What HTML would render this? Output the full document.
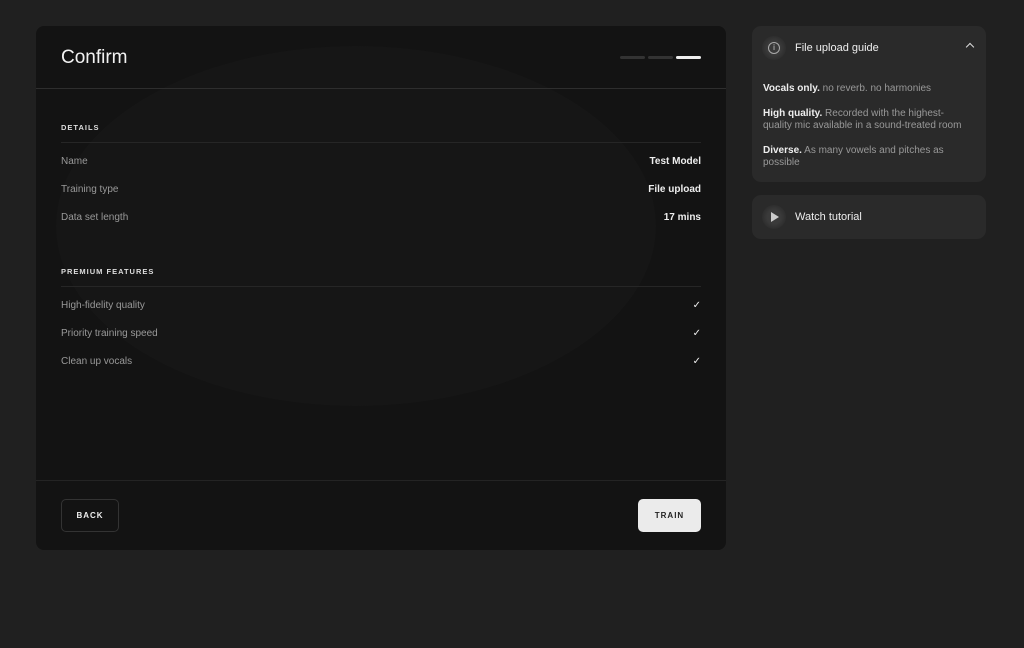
<!DOCTYPE html>
<html><head><meta charset="utf-8"><style>
*{box-sizing:border-box;margin:0;padding:0}
body{width:1024px;height:648px;background:#202020;font-family:"Liberation Sans",sans-serif;position:relative;overflow:hidden;color:#fff}
.card{position:absolute;left:36px;top:26px;width:690px;height:524px;background:#131313;border-radius:8px;overflow:hidden}
.glow{position:absolute;left:20px;top:20px;width:600px;height:360px;border-radius:50%;background:#161616}
.title{position:absolute;left:25px;top:21px;font-size:19px;color:#f2f2f2}
.prog{position:absolute;top:30px;height:3px;border-radius:2px}
.hr{position:absolute;left:0;right:0;height:1px;background:#2a2a2a}
.sec{position:absolute;left:25px;font-size:7.5px;font-weight:bold;letter-spacing:1px;color:#ddd}
.line{position:absolute;left:25px;width:640px;height:1px;background:#262626}
.row{position:absolute;left:25px;width:640px;font-size:10px;display:flex;justify-content:space-between}
.row span:first-child{color:#999}
.row span:last-child{color:#eee;font-weight:bold}
.row span.ck{font-weight:normal}
.btn{position:absolute;top:473px;height:33px;border-radius:5px;font-size:8px;font-weight:bold;letter-spacing:1px;display:flex;align-items:center;justify-content:center}
.panel{position:absolute;left:752px;width:234px;background:#2a2a2a;border-radius:9px}
.ic{position:absolute;left:10px;width:24px;height:24px;border-radius:50%;background:radial-gradient(circle,#3a3a3a 40%,#2c2c2c 75%)}
.p{font-size:10px;color:#999;line-height:12px;margin-bottom:13px}
.p b{color:#eee}
</style></head><body>
<div class="card">
<div class="glow"></div>
<div class="title">Confirm</div>
<div class="prog" style="left:584px;width:25px;background:#333"></div>
<div class="prog" style="left:612px;width:25px;background:#333"></div>
<div class="prog" style="left:640px;width:25px;background:#eee"></div>
<div class="hr" style="top:62px;background:#2e2e2e"></div>
<div class="sec" style="top:97px">DETAILS</div>
<div class="line" style="top:116px"></div>
<div class="row" style="top:130px"><span>Name</span><span>Test Model</span></div>
<div class="row" style="top:158px"><span>Training type</span><span>File upload</span></div>
<div class="row" style="top:186px"><span>Data set length</span><span>17 mins</span></div>
<div class="sec" style="top:241px">PREMIUM FEATURES</div>
<div class="line" style="top:260px"></div>
<div class="row" style="top:274px"><span>High-fidelity quality</span><span class="ck">✓</span></div>
<div class="row" style="top:302px"><span>Priority training speed</span><span class="ck">✓</span></div>
<div class="row" style="top:330px"><span>Clean up vocals</span><span class="ck">✓</span></div>
<div class="hr" style="top:454px;background:#242424"></div>
<div class="btn" style="left:25px;width:58px;border:1px solid #333;color:#eee">BACK</div>
<div class="btn" style="left:602px;width:63px;background:#ebebeb;color:#222">TRAIN</div>
</div>
<div class="panel" style="top:26px;height:156px">
<div class="ic" style="top:10px"><div style="position:absolute;left:6px;top:6px;width:12px;height:12px;border:1px solid #aaa;border-radius:50%;font-size:8px;color:#ccc;text-align:center;line-height:10px">i</div></div>
<div style="position:absolute;left:43px;top:16px;font-size:11px;color:#eee">File upload guide</div>
<div style="position:absolute;left:215px;top:18px;width:6px;height:6px;border-left:1.3px solid #ddd;border-top:1.3px solid #ddd;transform:rotate(45deg)"></div>
<div style="position:absolute;left:11px;top:57px;width:205px">
<div class="p"><b>Vocals only.</b> no reverb. no harmonies</div>
<div class="p"><b>High quality.</b> Recorded with the highest-quality mic available in a sound-treated room</div>
<div class="p"><b>Diverse.</b> As many vowels and pitches as possible</div>
</div></div>
<div class="panel" style="top:195px;height:44px">
<div class="ic" style="top:10px"><div style="position:absolute;left:9px;top:7px;border-left:8px solid #ccc;border-top:5px solid transparent;border-bottom:5px solid transparent"></div></div>
<div style="position:absolute;left:43px;top:16px;font-size:11px;color:#eee">Watch tutorial</div>
</div>
</body></html>
